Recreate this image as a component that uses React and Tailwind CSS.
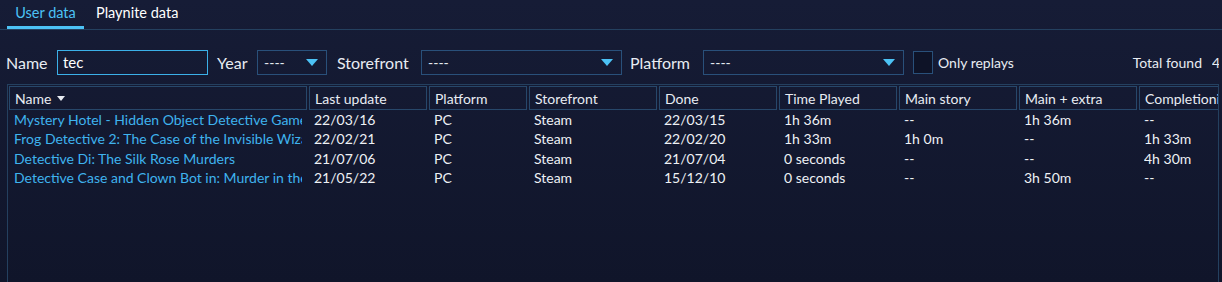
import React from 'react';

const columns = [
    { key: 'name', label: 'Name', width: 'w-[300px]', sort: true },
    { key: 'updated', label: 'Last update', width: 'w-[120px]' },
    { key: 'platform', label: 'Platform', width: 'w-[100px]' },
    { key: 'store', label: 'Storefront', width: 'w-[130px]' },
    { key: 'done', label: 'Done', width: 'w-[120px]' },
    { key: 'played', label: 'Time Played', width: 'w-[120px]' },
    { key: 'main', label: 'Main story', width: 'w-[120px]' },
    { key: 'extra', label: 'Main + extra', width: 'w-[120px]' },
    { key: 'complete', label: 'Completionist', width: 'w-[120px]' },
];

const rows = [
    { name: 'Mystery Hotel - Hidden Object Detective Game', updated: '22/03/16', platform: 'PC', store: 'Steam', done: '22/03/15', played: '1h 36m', main: '--', extra: '1h 36m', complete: '--' },
    { name: 'Frog Detective 2: The Case of the Invisible Wizard', updated: '22/02/21', platform: 'PC', store: 'Steam', done: '22/02/20', played: '1h 33m', main: '1h 0m', extra: '--', complete: '1h 33m' },
    { name: 'Detective Di: The Silk Rose Murders', updated: '21/07/06', platform: 'PC', store: 'Steam', done: '21/07/04', played: '0 seconds', main: '--', extra: '--', complete: '4h 30m' },
    { name: 'Detective Case and Clown Bot in: Murder in the Hotel Lisbon', updated: '21/05/22', platform: 'PC', store: 'Steam', done: '15/12/10', played: '0 seconds', main: '--', extra: '3h 50m', complete: '--' },
];

const Arrow = () => (
    <svg width="12" height="7" viewBox="0 0 12 7" className="shrink-0">
        <path d="M0 0 H12 L6 7 Z" fill="#4cc2f5" />
    </svg>
);

const Select = ({ width }) => (
    <div className={`${width} h-[25px] border border-[#29507a] flex items-center justify-between pl-[6px] pr-[8px] text-[14px] text-[#e6eaf0]`}>
        <span>----</span>
        <Arrow />
    </div>
);

const App = () => {
    return (
        <div
            className="w-[1222px] h-[282px] overflow-hidden bg-gradient-to-b from-[#161c36] to-[#10152a] text-[#e8ecf2]"
            style={{ fontFamily: '"Lato", "Liberation Sans", sans-serif' }}
        >
            {/* tabs */}
            <div className="flex items-end h-[30px] border-b border-[#24405f] pl-[7px]">
                <div className="w-[77px] h-[30px] flex items-center justify-center text-[14.5px] text-[#4cc2f5] border-b-[3px] border-[#4cc2f5]">
                    User data
                </div>
                <div className="h-[30px] flex items-center pl-[12px] text-[14.5px] text-white pb-[3px]">
                    Playnite data
                </div>
            </div>

            {/* filters */}
            <div className="flex items-center h-[25px] mt-[20px] pl-[6px] pr-[3px] text-[16px]">
                <span className="w-[41px]">Name</span>
                <div className="ml-[10px] w-[151px] h-[25px] border border-[#3bb0e8] flex items-center pl-[5px] text-[15px] text-white">tec</div>
                <span className="ml-[9px] w-[30px]">Year</span>
                <div className="ml-[10px]"><Select width="w-[70px]" /></div>
                <span className="ml-[10px] w-[74px]">Storefront</span>
                <div className="ml-[10px]"><Select width="w-[201px]" /></div>
                <span className="ml-[8px] w-[64px]">Platform</span>
                <div className="ml-[9px]"><Select width="w-[201px]" /></div>
                <div className="ml-[9px] w-[20px] h-[23px] border border-[#29507a] bg-[#0e1327]" />
                <span className="ml-[5px] text-[14px]">Only replays</span>
                <span className="ml-auto text-[14px]">Total found</span>
                <span className="ml-[10px] text-[14px] w-[7px] overflow-hidden">4</span>
            </div>

            {/* table */}
            <div className="mt-[9px] ml-[7px] w-[1212px] h-[220px] border border-[#24405f] p-px overflow-hidden">
                <div className="flex h-[24px]">
                    {columns.map((c) => (
                        <div key={c.key} className={`${c.width} shrink-0 pr-[2px]`}>
                            <div className="h-[24px] border border-[#27476a] flex items-center pl-[5px] text-[14px] whitespace-nowrap overflow-hidden">
                                {c.label}
                                {c.sort && (
                                    <svg width="8" height="5" viewBox="0 0 8 5" className="ml-[6px]">
                                        <path d="M0 0 H8 L4 5 Z" fill="#e8ecf2" />
                                    </svg>
                                )}
                            </div>
                        </div>
                    ))}
                </div>
                <div>
                    {rows.map((r, i) => (
                        <div key={i} className="flex h-[19.3px] items-center text-[14px]">
                            {columns.map((c) => (
                                <div key={c.key} className={`${c.width} shrink-0 pl-[5px] pr-[7px]`}>
                                    <div className={`whitespace-nowrap overflow-hidden ${c.key === 'name' ? 'text-[#3fb3ee]' : 'text-[#eef1f5]'}`}>
                                        {r[c.key]}
                                    </div>
                                </div>
                            ))}
                        </div>
                    ))}
                </div>
            </div>
        </div>
    );
};

export default App;
